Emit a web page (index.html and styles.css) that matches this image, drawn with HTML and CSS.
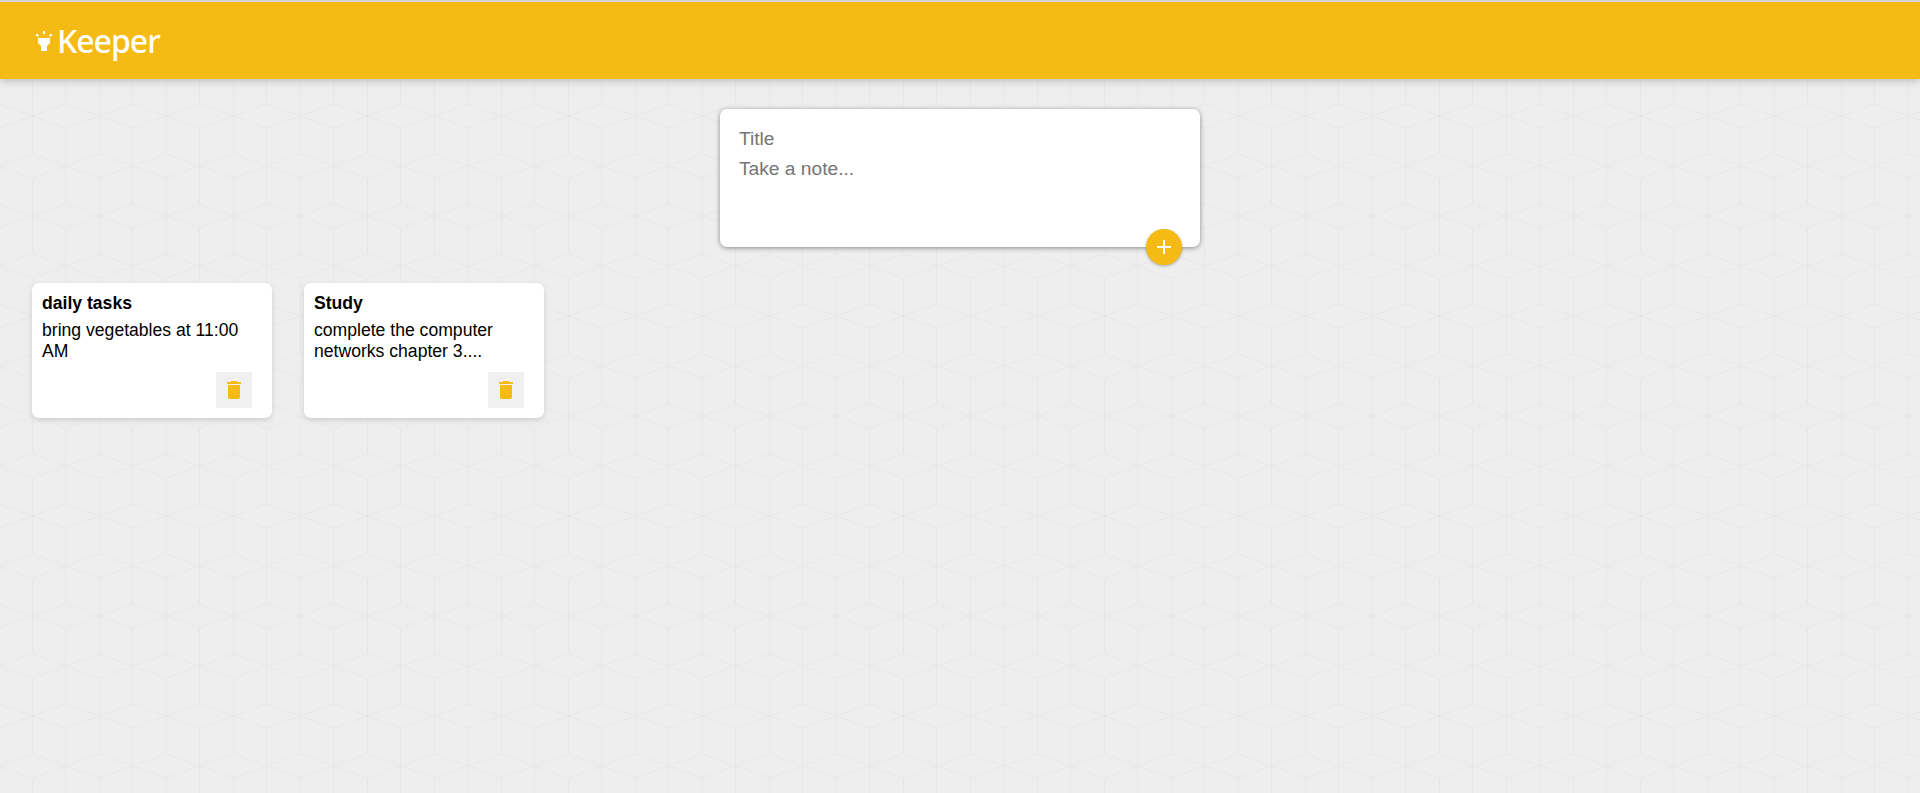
FILE: index.html
```html
<!DOCTYPE html>
<html lang="en">
<head>
    <meta charset="UTF-8">
    <meta name="viewport" content="width=device-width, initial-scale=1.0">
    <title>Keeper</title>
    <link rel="stylesheet" href="styles.css">
</head>
<body>
    <header class="app-header">
        <h1 class="logo">
            <svg class="logo-icon" viewBox="0 0 24 24"><path d="M6 14l3 3v5h6v-5l3-3V9H6zm5-12h2v3h-2zM3.5 5.875 4.914 4.46l2.12 2.122L5.62 7.997zm13.46.71 2.123-2.12 1.414 1.414L18.375 8z"/></svg>
            <span class="logo-text">Keeper</span>
        </h1>
    </header>

    <form class="create-note">
        <input class="create-title" type="text" name="title" placeholder="Title">
        <textarea class="create-content" name="content" rows="3" placeholder="Take a note..."></textarea>
        <button class="add-button" type="button">
            <svg viewBox="0 0 24 24"><path d="M19 13h-6v6h-2v-6H5v-2h6V5h2v6h6z"/></svg>
        </button>
    </form>

    <div class="notes">
        <div class="note">
            <h2>daily tasks</h2>
            <p>bring vegetables at 11:00 AM</p>
            <button class="delete-button" type="button">
                <svg viewBox="0 0 24 24"><path d="M6 19c0 1.1.9 2 2 2h8c1.1 0 2-.9 2-2V7H6zM19 4h-3.5l-1-1h-5l-1 1H5v2h14z"/></svg>
            </button>
        </div>
        <div class="note">
            <h2>Study</h2>
            <p>complete the computer networks chapter 3....</p>
            <button class="delete-button" type="button">
                <svg viewBox="0 0 24 24"><path d="M6 19c0 1.1.9 2 2 2h8c1.1 0 2-.9 2-2V7H6zM19 4h-3.5l-1-1h-5l-1 1H5v2h14z"/></svg>
            </button>
        </div>
    </div>
</body>
</html>
```

FILE: styles.css
```css
* {
    box-sizing: border-box;
}
html {
    height: 100%;
}
body {
    margin: 0;
    min-height: 100%;
    border-top: 2px solid #d4d4d4;
    font-family: "Liberation Sans", Arial, sans-serif;
    background-color: #eeeeee;
    background-image: url("data:image/svg+xml,%3Csvg xmlns='http://www.w3.org/2000/svg' width='67' height='100'%3E%3Cpath d='M.5 25L33.5 13L67.5 25L33.5 37ZM33.5 75L67.5 63M33.5 75L67.5 87M.5 63L33.5 75M.5 87L33.5 75M33.5 37V100M33.5 0V13M.5 0V63M.5 87V100M-33.5 25L.5 13L.5 37Z' fill='none' stroke='%23e7e7e7' stroke-width='1'/%3E%3C/svg%3E");
    background-position: 32px 91px;
}
.app-header {
    background-color: #f5ba13;
    padding: 16px 32px;
    height: 77px;
    box-shadow: 0 0 10px 0 rgba(0, 0, 0, 0.3);
}
.logo {
    display: flex;
    align-items: center;
    margin: 0;
    color: white;
}
.logo-icon {
    width: 24px;
    height: 24px;
    fill: white;
}
.logo-text {
    margin-left: 1px;
    font-family: "Noto Sans", sans-serif;
    font-size: 32px;
    font-weight: 500;
    letter-spacing: -1px;
    line-height: 45px;
}
.create-note {
    position: relative;
    width: 480px;
    height: 138px;
    margin: 30px auto 20px;
    padding: 15px;
    background: white;
    border-radius: 7px;
    box-shadow: 0 1px 5px #8a8989;
}
.create-title,
.create-content {
    display: block;
    width: 100%;
    padding: 4px;
    border: none;
    outline: none;
    resize: none;
    font-family: "Liberation Sans", Arial, sans-serif;
    font-size: 19.2px;
}
.add-button {
    position: absolute;
    right: 18px;
    bottom: -18px;
    display: flex;
    align-items: center;
    justify-content: center;
    width: 36px;
    height: 36px;
    padding: 0;
    border: none;
    border-radius: 50%;
    background: #f5ba13;
    box-shadow: 0 1px 3px rgba(0, 0, 0, 0.3);
}
.add-button svg {
    width: 24px;
    height: 24px;
    fill: white;
}
.notes {
    display: flex;
    gap: 32px;
    padding: 16px 32px;
}
.note {
    width: 240px;
    height: 135px;
    padding: 10px;
    background: white;
    border-radius: 7px;
    box-shadow: 0 2px 5px #cccccc;
}
.note h2 {
    margin: 0 0 7px;
    font-size: 17.6px;
    line-height: 20px;
}
.note p {
    margin: 0 0 10px;
    font-size: 17.6px;
    line-height: 21px;
}
.delete-button {
    display: flex;
    align-items: center;
    justify-content: center;
    width: 36px;
    height: 36px;
    margin: 0 10px 0 auto;
    padding: 0;
    border: none;
    background: #f0f0f0;
}
.delete-button svg {
    width: 24px;
    height: 24px;
    fill: #f5ba13;
}
```
